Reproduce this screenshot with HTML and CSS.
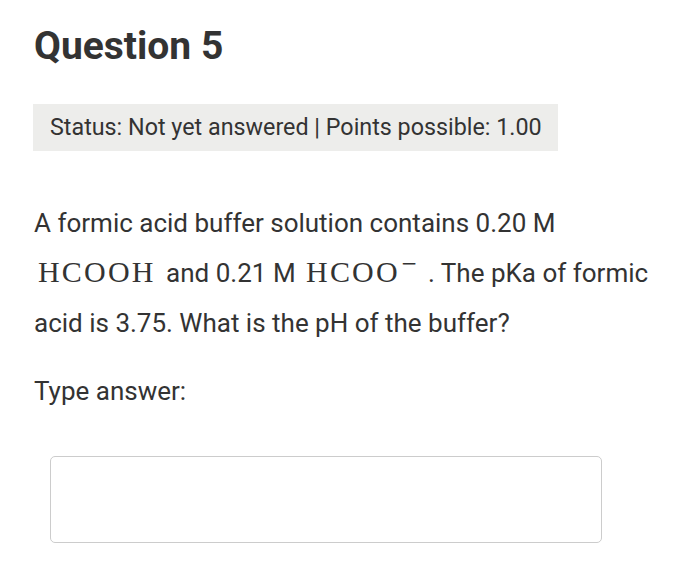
FILE: index.html
```html
<!DOCTYPE html>
<html lang="en">
<head>
<meta charset="utf-8">
<title>Question 5</title>
<link rel="stylesheet" href="styles.css">
</head>
<body>
<main class="question">
  <h1 class="title">Question 5</h1>
  <div class="status">Status: Not yet answered | Points possible: 1.00</div>
  <p class="prompt">A formic acid buffer solution contains 0.20 M <span class="math">HCOOH</span> and 0.21 M <span class="math">HCOO<sup class="charge">−</sup></span> . The pKa of formic acid is 3.75. What is the pH of the buffer?</p>
  <div class="label">Type answer:</div>
  <div class="answer"></div>
</main>
</body>
</html>
```

FILE: styles.css
```css
html, body {
  margin: 0;
  padding: 0;
  background: #ffffff;
}

body {
  font-family: Roboto, "Liberation Sans", sans-serif;
  color: #333333;
}

.question {
  padding: 22px 34px 0 34px;
}

.title {
  margin: 0;
  font-size: 39px;
  line-height: 48px;
  font-weight: 700;
  color: #333333;
}

.status {
  display: inline-block;
  margin: 34px 0 0 -1px;
  padding: 0 16px 0 17px;
  height: 47px;
  line-height: 47px;
  font-size: 23.3px;
  background: #ededeb;
  color: #333333;
}

.prompt {
  margin: 47px 0 0 0;
  font-size: 26px;
  line-height: 50px;
}

.math {
  font-family: "Liberation Serif", "Times New Roman", serif;
  font-size: 30px;
  line-height: 30px;
  letter-spacing: 2.2px;
  white-space: nowrap;
  margin: 0 4px 0 4px;
}

.charge {
  font-family: "DejaVu Sans", sans-serif;
  font-size: 20px;
  vertical-align: 0;
  position: relative;
  top: -12px;
  margin-left: 1px;
  line-height: 0;
  letter-spacing: 0;
}

.label {
  margin-top: 18px;
  font-size: 26px;
  line-height: 50px;
}

.answer {
  margin: 40px 0 0 16px;
  width: 552px;
  height: 87px;
  box-sizing: border-box;
  border: 1.5px solid #cccccc;
  border-radius: 5px;
  background: #ffffff;
}
```
